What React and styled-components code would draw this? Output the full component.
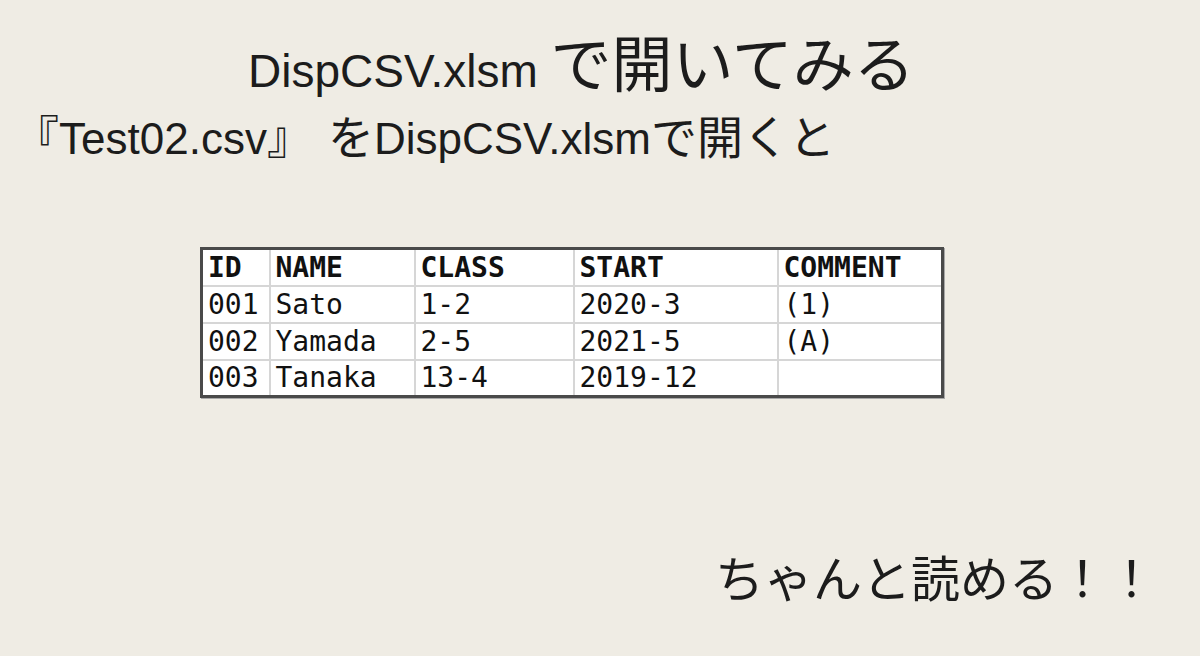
import React from "react";
import styled, { createGlobalStyle } from "styled-components";

const Global = createGlobalStyle`
  html, body { margin: 0; padding: 0; background: #efece4; }
  body { font-family: "Liberation Sans", "Noto Sans CJK JP", sans-serif; color: #1a1a1a; }
`;

const Slide = styled.div`
  width: 1200px;
  height: 656px;
  box-sizing: border-box;
  background: #efece4;
  display: flex;
  flex-direction: column;
  align-items: flex-start;
  overflow: hidden;
`;

const Title = styled.h1`
  margin: 31px 0 0 248px;
  font-family: "Liberation Sans", "Noto Sans CJK JP", sans-serif;
  font-weight: 400;
  font-size: 46px;
  line-height: 60px;
  color: #1c1c1c;
  white-space: nowrap;
`;

const Jp = styled.span`
  font-family: "Noto Sans CJK JP", sans-serif;
  font-size: ${(p) => p.$size}px;
  margin-left: ${(p) => p.$gap || 0}px;
`;

const Subtitle = styled.div`
  margin: 7px 0 0 14px;
  font-family: "Liberation Sans", "Noto Sans CJK JP", sans-serif;
  font-size: 44px;
  line-height: 52px;
  color: #1c1c1c;
  white-space: nowrap;
`;

const Sheet = styled.table`
  margin: 82px 0 0 200px;
  border-collapse: collapse;
  table-layout: fixed;
  width: 741px;
  background: #ffffff;
  border: 3px solid #4a4a4a;
  box-shadow: 1px 1px 0 #a8a8a8;
  font-family: "DejaVu Sans Mono", "Noto Sans CJK JP", monospace;
  font-size: 28px;
  color: #111;
`;

const Cell = styled.td`
  box-sizing: border-box;
  border: 2px solid #d6d6d6;
  height: 37px;
  padding: 0 4px 0 5px;
  line-height: 33px;
  white-space: nowrap;
  overflow: hidden;
  text-align: left;
  width: ${(p) => p.$w}px;
  font-weight: ${(p) => (p.$head ? 700 : 400)};
  vertical-align: middle;
`;

const Footer = styled.div`
  margin-top: auto;
  margin-bottom: 52px;
  align-self: flex-end;
  margin-right: 44px;
  font-family: "Noto Sans CJK JP", sans-serif;
  font-size: 49px;
  line-height: 56px;
  color: #1c1c1c;
  white-space: nowrap;
`;

const widths = [68, 145, 159, 204, 165];
const rows = [
  ["ID", "NAME", "CLASS", "START", "COMMENT"],
  ["001", "Sato", "1-2", "2020-3", "(1)"],
  ["002", "Yamada", "2-5", "2021-5", "(A)"],
  ["003", "Tanaka", "13-4", "2019-12", ""],
];

export default function App() {
  return (
    <>
      <Global />
      <Slide>
        <Title>
          DispCSV.xlsm <Jp $size={61}>で開いてみる</Jp>
        </Title>
        <Subtitle>
          <Jp $size={45}>『</Jp>Test02.csv<Jp $size={45}>』</Jp>
          <Jp $size={46} $gap={16}>を</Jp>DispCSV.xlsm<Jp $size={46}>で開くと</Jp>
        </Subtitle>
        <Sheet>
          <tbody>
            {rows.map((r, i) => (
              <tr key={i}>
                {r.map((c, j) => (
                  <Cell key={j} $w={widths[j]} $head={i === 0}>
                    {c}
                  </Cell>
                ))}
              </tr>
            ))}
          </tbody>
        </Sheet>
        <Footer>ちゃんと読める！！</Footer>
      </Slide>
    </>
  );
}
